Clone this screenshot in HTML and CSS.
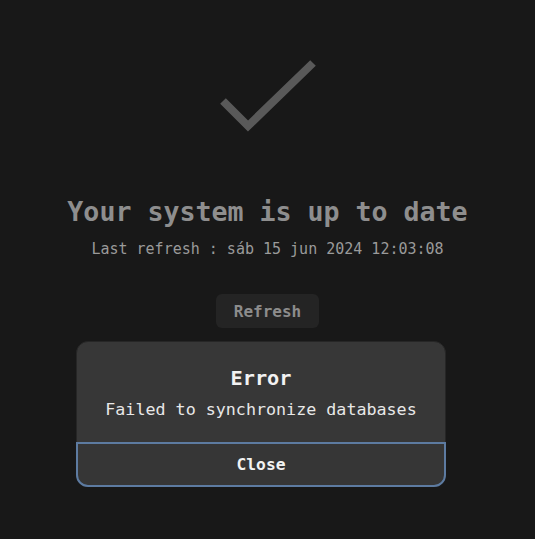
FILE: index.html
```html
<!DOCTYPE html>
<html lang="en">
<head>
    <meta charset="UTF-8">
    <meta name="viewport" content="width=device-width, initial-scale=1.0">
    <title>Updates</title>
    <link rel="stylesheet" href="styles.css">
</head>
<body>
    <div class="status">
        <svg class="check" viewBox="0 0 100 80">
            <polyline points="5,45 30,70 95,7"/>
        </svg>
        <div class="heading">Your system is up to date</div>
        <div class="last-refresh">Last refresh : sáb 15 jun 2024 12:03:08</div>
        <button class="refresh-btn">Refresh</button>
    </div>
    <div class="dialog">
        <div class="dialog-body">
            <div class="dialog-title">Error</div>
            <div class="dialog-text">Failed to synchronize databases</div>
        </div>
        <button class="dialog-close">Close</button>
    </div>
</body>
</html>
```

FILE: styles.css
```css
body {
    margin: 0;
    padding: 0;
    background: #181818;
    color: #fff;
    font-family: 'DejaVu Sans Mono', 'Liberation Mono', monospace;
    width: 535px;
    height: 539px;
    overflow: hidden;
}
.status {
    display: flex;
    flex-direction: column;
    align-items: center;
    padding-top: 56px;
}
.check {
    width: 100px;
    height: 80px;
    display: block;
}
.check polyline {
    fill: none;
    stroke: #595959;
    stroke-width: 8;
    stroke-linejoin: miter;
    stroke-linecap: butt;
}
.heading {
    margin-top: 60px;
    font-size: 26.6px;
    line-height: 32px;
    font-weight: 700;
    color: #8e8e8e;
}
.last-refresh {
    margin-top: 12px;
    font-size: 15px;
    line-height: 18px;
    color: #9a9a9a;
}
.refresh-btn {
    margin-top: 36px;
    height: 34px;
    padding: 0 18px;
    border: none;
    border-radius: 6px;
    background: #242424;
    color: #8c8c8c;
    font-family: inherit;
    font-size: 16px;
    font-weight: 700;
}
.dialog {
    margin: 13px 0 0 76px;
    width: 370px;
    background: #373737;
    border: 1px solid #262626;
    border-radius: 12px;
    box-sizing: border-box;
}
.dialog-body {
    display: flex;
    flex-direction: column;
    align-items: center;
    padding: 24px 0 23px;
}
.dialog-title {
    font-size: 20.3px;
    line-height: 24px;
    font-weight: 700;
    color: #f2f2f2;
}
.dialog-text {
    margin-top: 9px;
    font-size: 16.7px;
    line-height: 20px;
    color: #e8e8e8;
}
.dialog-close {
    display: block;
    width: calc(100% + 2px);
    height: 45px;
    margin: 0 -1px -1px;
    background: #363636;
    border: 2px solid #5d7ba1;
    border-radius: 0 0 12px 12px;
    color: #f2f2f2;
    font-family: inherit;
    font-size: 16.3px;
    font-weight: 700;
}
```
